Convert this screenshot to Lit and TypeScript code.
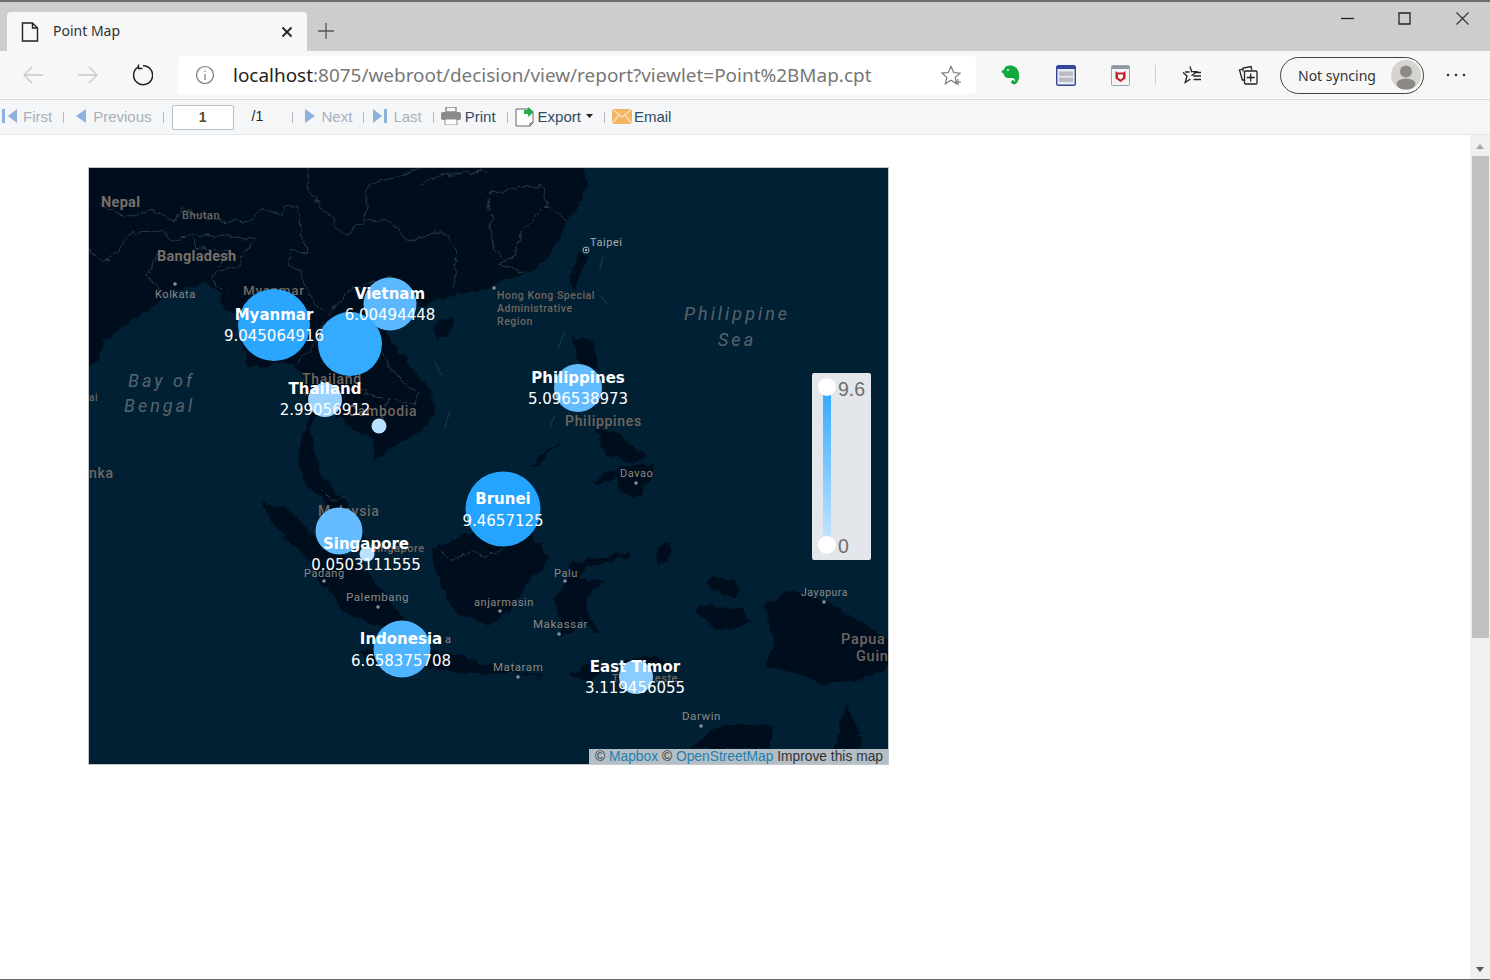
import { LitElement, html, css, svg } from "lit";
import { customElement } from "lit/decorators.js";

// land shapes are in "zoom space": 3 units = 1px, origin at map top-left
const LAND = [
  "M0 0L1480 0L1500 50L1480 100L1440 170L1380 280L1330 320L1260 340L1210 370L1160 380L1060 400L1000 425L920 430L880 470L900 510L960 590L1030 680L1042 740L1000 800L920 840L862 885L855 820L790 790L740 745L690 750L668 800L690 900L720 960L770 1000L800 1060L835 1125L780 1110L740 1080L700 1000L650 960L630 900L640 820L670 750L650 690L640 620L590 590L540 605L480 605L460 500L450 450L410 430L390 380L350 350L300 370L230 390L200 420L100 490L45 530L30 590L0 600Z",
  "M1030 490L1060 462L1100 458L1090 500L1050 525Z",
  "M1480 262L1500 270L1470 340L1462 378L1440 340Z",
  "M1455 515L1520 525L1525 600L1490 650L1470 600Z",
  "M1520 790L1580 800L1670 870L1640 900L1550 860Z",
  "M1330 900L1420 820L1410 835L1345 905Z",
  "M1510 950L1590 905L1700 900L1690 950L1640 1000L1595 980L1590 940L1520 960Z",
  "M520 1015L600 1030L700 1130L830 1210L920 1330L965 1370L880 1385L780 1350L700 1250L640 1170L560 1080Z",
  "M800 1460L950 1440L1100 1470L1200 1500L1320 1520L1400 1540L1300 1525L1180 1530L1000 1510L850 1490Z",
  "M1030 1150L1130 1110L1210 1095L1310 1090L1390 1180L1320 1250L1260 1340L1200 1385L1100 1340L1060 1270Z",
  "M1440 1195L1630 1160L1625 1175L1500 1205L1470 1240L1550 1245L1500 1290L1490 1330L1540 1410L1500 1390L1480 1350L1460 1400L1420 1410L1400 1300L1440 1240Z",
  "M1440 1530L1520 1490L1570 1510L1500 1550ZM1600 1490L1700 1470L1760 1510L1640 1520Z",
  "M1860 1240L1900 1235L1960 1260L1940 1300L1860 1270ZM1710 1150L1750 1130L1740 1190L1710 1200Z",
  "M2030 1320L2100 1275L2200 1300L2300 1360L2400 1420L2400 1510L2300 1550L2220 1560L2100 1520L2030 1500L2060 1430Z",
  "M1800 1750L1900 1680L2060 1680L2040 1750ZM2240 1750L2270 1620L2310 1680L2320 1750Z",
  "M1840 1320L1960 1330L1990 1370L1900 1400L1820 1340Z",
];

const BORDERS = [
  "M30 110L100 150L200 140L260 170L280 130L400 170L480 170L520 130L580 150L600 120L630 120L640 200L660 260L610 260L600 300L640 320L660 380L700 440",
  "M0 250L50 290L90 260L100 230L150 200L230 200L250 230L320 210L420 215L500 220L450 300L390 320L370 340L420 390",
  "M210 260L180 330L230 390M320 220L320 250L420 260L390 310M660 10L660 80L720 150L770 210L830 170L900 160L960 230L1060 200L1100 240L1100 370",
  "M720 450L790 370L860 350L905 340M905 340L1000 430M880 560L930 640L990 680L980 720L900 700L880 780M700 470L690 530L620 600M650 690L740 660L820 680L880 700",
  "M830 170L840 60L920 40L1000 10M1000 60L1050 30L1200 20M1200 90L1270 70L1360 60L1380 120L1440 170M1380 120L1300 200L1280 270L1230 300L1310 320M1200 100L1215 240L1240 280",
  "M700 970L740 1010L770 990M1050 1150L1090 1185L1150 1160L1200 1175L1240 1150",
];

const ISLES = [
  "M1535 390L1560 420M1040 590L1060 630M1085 740L1070 790M1545 275L1535 315M1430 500L1410 550M1400 750L1385 790",
];

// x, baseline y are page coordinates
const LABELS: [string, number, number, number, string?][] = [
  ["Nepal", 101, 207, 14.5, "strong"],
  ["Bhutan", 182, 219, 11],
  ["Bangladesh", 157, 261, 14.5, "strong"],
  ["Kolkata", 155, 298, 11, "city"],
  ["Myanmar", 243, 295, 13.5],
  ["Thailand", 302, 384, 14],
  ["Cambodia", 348, 416, 14],
  ["ai", 89, 401, 10],
  ["nka", 89, 478, 14],
  ["Malaysia", 318, 516, 14],
  ["Singapore", 370, 552, 11],
  ["Padang", 304, 577, 11, "city"],
  ["Palembang", 346, 601, 11.5, "city"],
  ["a", 445, 643, 11, "city"],
  ["anjarmasin", 474, 606, 11, "city"],
  ["Makassar", 533, 628, 11.5, "city"],
  ["Palu", 554, 577, 11, "city"],
  ["Davao", 620, 477, 11, "city"],
  ["Jayapura", 801, 596, 10.5, "city"],
  ["Papua", 841, 644, 14.5],
  ["Guin", 856, 661, 14.5],
  ["Mataram", 493, 671, 11.5, "city"],
  ["Darwin", 682, 720, 11.5, "city"],
  ["Taipei", 590, 246, 11, "pale"],
  ["Hong Kong Special", 497, 299, 10.5],
  ["Administrative", 497, 312, 10.5],
  ["Region", 497, 325, 10.5],
  ["Philippines", 565, 426, 14],
  ["Timor-Leste", 612, 682, 11],
  ["Bay of", 128, 387, 18, "sea"],
  ["Bengal", 124, 412, 18, "sea"],
  ["Philippine", 684, 320, 18, "sea"],
  ["Sea", 718, 346, 18, "sea"],
];

const DOTS: [number, number][] = [
  [175, 284], [494, 288], [324, 581], [378, 607], [500, 611], [559, 634],
  [565, 581], [636, 483], [824, 602], [518, 677], [701, 726],
];

const BUBBLES: [number, number, number, string][] = [
  [390, 304, 26.5, "#5ab8ff"],
  [274, 325, 36, "#2aa6ff"],
  [350, 344, 32, "#35abff"],
  [325, 400, 17, "#99d2ff"],
  [379, 426, 7.5, "#b9e0ff"],
  [578, 388, 24, "#62bbff"],
  [503, 509, 37.5, "#24a4ff"],
  [339, 531, 23.5, "#64bbff"],
  [367, 554, 7.5, "#b9e0ff"],
  [402, 649, 28.5, "#4fb4ff"],
  [636, 677, 17, "#8bccff"],
];

const POINTS: [string, string, number, number, number][] = [
  ["Myanmar", "9.045064916", 274, 320, 341],
  ["Vietnam", "6.00494448", 390, 299, 320],
  ["Thailand", "2.99056912", 325, 394, 415],
  ["Philippines", "5.096538973", 578, 383, 404],
  ["Brunei", "9.4657125", 503, 504, 526],
  ["Singapore", "0.0503111555", 366, 549, 570],
  ["Indonesia", "6.658375708", 401, 644, 666],
  ["East Timor", "3.119456055", 635, 672, 693],
];

const MX = 89;
const MY = 168;

@customElement("point-map")
class PointMap extends LitElement {
  static styles = css`
    :host {
      display: block;
      position: relative;
      width: 799px;
      height: 596px;
      background: #012033;
      overflow: hidden;
      box-shadow: 0 0 0 1px #c4c8cc;
    }
    svg.canvas {
      display: block;
      width: 799px;
      height: 596px;
    }
    .land { fill: #00111f; }
    .border { fill: none; stroke: #36424c; stroke-width: 2.4; }
    .isle { fill: none; stroke: #2b4252; stroke-width: 2.4; }
    .lbl {
      font-family: Roboto, sans-serif;
      fill: #6f6660;
      font-weight: 500;
      letter-spacing: 0.05em;
    }
    .lbl.strong { fill: #77706a; font-weight: 700; letter-spacing: 0.02em; }
    .lbl.city { fill: #8b8a88; font-weight: 400; }
    .lbl.pale { fill: #a9adb0; font-weight: 400; }
    .lbl.sea { fill: #56646e; font-style: italic; font-weight: 400; letter-spacing: 3px; }
    .dot { fill: #8b8f92; }
    .name, .val {
      font-family: "DejaVu Sans", sans-serif;
      fill: #fff;
      text-anchor: middle;
      font-size: 15px;
    }
    .name { font-weight: 700; }
    .legend {
      position: absolute;
      left: 723px;
      top: 205px;
      width: 59px;
      height: 187px;
      background: #e3e6ea;
      border-radius: 2px;
      display: flex;
      padding: 5px 0 6px 6px;
      box-sizing: border-box;
    }
    .rail {
      position: relative;
      width: 18px;
      display: flex;
      justify-content: center;
    }
    .bar {
      width: 8px;
      margin: 9px 0;
      background: linear-gradient(#2fa8ff, #c8e6ff);
    }
    .knob {
      position: absolute;
      left: 0;
      width: 18px;
      height: 18px;
      border-radius: 50%;
      background: #fff;
    }
    .knob.hi { top: 0; }
    .knob.lo { bottom: 0; }
    .scale {
      display: flex;
      flex-direction: column;
      justify-content: space-between;
      margin: 0 0 -3px 2px;
      font: 19.5px/22px "Liberation Sans", sans-serif;
      color: #6e6e6e;
    }
    .attrib {
      position: absolute;
      right: 0;
      bottom: 0;
      height: 15px;
      width: 299px;
      padding-left: 6px;
      box-sizing: border-box;
      background: #b4bec5;
      font: 13.8px/15px "Liberation Sans", sans-serif;
      color: #333;
      white-space: nowrap;
    }
    .attrib a { color: #1f80b0; text-decoration: none; }
  `;

  render() {
    return html`
      <svg class="canvas" viewBox="0 0 799 596">
        <defs>
          <filter id="rough" filterUnits="userSpaceOnUse" x="-100" y="-100" width="2600" height="2000">
            <feTurbulence type="fractalNoise" baseFrequency="0.035" numOctaves="3" seed="4"></feTurbulence>
            <feDisplacementMap in="SourceGraphic" scale="26" xChannelSelector="R" yChannelSelector="G"></feDisplacementMap>
          </filter>
        </defs>
        <g transform="translate(-1,-3) scale(0.33333)">
          <g filter="url(#rough)">
            ${LAND.map((d) => svg`<path class="land" d=${d}></path>`)}
            ${BORDERS.map((d) => svg`<path class="border" d=${d}></path>`)}
          </g>
          ${ISLES.map((d) => svg`<path class="isle" d=${d}></path>`)}
        </g>
        ${DOTS.map(([x, y]) => svg`<circle class="dot" cx=${x - MX} cy=${y - MY} r="1.8"></circle>`)}
        <circle cx=${586 - MX} cy=${250 - MY} r="3" fill="none" stroke="#a9adb0"></circle>
        <circle cx=${586 - MX} cy=${250 - MY} r="1.2" fill="#a9adb0"></circle>
        ${LABELS.map(
          ([t, x, y, s, k]) =>
            svg`<text class="lbl ${k ?? ""}" x=${x - MX} y=${y - MY} font-size=${s}>${t}</text>`
        )}
        ${BUBBLES.map(
          ([x, y, r, c]) => svg`<circle cx=${x - MX} cy=${y - MY} r=${r} fill=${c}></circle>`
        )}
        ${POINTS.map(
          ([n, v, x, y1, y2]) => svg`
            <text class="name" x=${x - MX} y=${y1 - MY}>${n}</text>
            <text class="val" x=${x - MX} y=${y2 - MY}>${v}</text>`
        )}
      </svg>
      <div class="legend">
        <div class="rail">
          <div class="bar"></div>
          <div class="knob hi"></div>
          <div class="knob lo"></div>
        </div>
        <div class="scale"><span>9.6</span><span>0</span></div>
      </div>
      <div class="attrib">© <a>Mapbox</a> © <a>OpenStreetMap</a> Improve this map</div>
    `;
  }
}

@customElement("app-root")
class AppRoot extends LitElement {
  static styles = css`
    :host {
      display: flex;
      flex-direction: column;
      width: 1490px;
      height: 980px;
      overflow: hidden;
      font-family: "Noto Sans", sans-serif;
      background: #fff;
      box-sizing: border-box;
      border-bottom: 1px solid #666;
    }
    .tabs {
      height: 49px;
      flex: none;
      border-top: 2px solid #6d6d6d;
      background: #cdcdcd;
      display: flex;
      align-items: flex-end;
      padding-left: 7px;
      position: relative;
    }
    .tab {
      width: 300px;
      height: 39px;
      background: #f7f7f7;
      border-radius: 4px 4px 0 0;
      display: flex;
      align-items: center;
      padding: 0 14px 0 14px;
      box-sizing: border-box;
      font-size: 14px;
      color: #333;
    }
    .tab span { margin: 0 0 2px 14px; flex: 1; }
    .newtab { margin: 0 0 11px 10px; display: block; }
    .winbtns {
      position: absolute;
      right: -1px;
      top: 0;
      display: flex;
    }
    .winbtns div {
      width: 57.5px;
      height: 32px;
      display: flex;
      align-items: center;
      justify-content: center;
    }
    .nav {
      height: 48px;
      flex: none;
      background: #f7f7f7;
      display: flex;
      align-items: center;
      padding-left: 5px;
      border-bottom: 1px solid #d9d9d9;
    }
    .slot {
      width: 55px;
      height: 38px;
      flex: none;
      display: flex;
      align-items: center;
      justify-content: center;
    }
    .slot.reload svg { margin-left: -2px; }
    .addr {
      width: 798px;
      height: 38px;
      margin: 0 7px 0 8px;
      flex: none;
      background: #fff;
      border-radius: 4px;
      display: flex;
      align-items: center;
      box-sizing: border-box;
      padding: 0 13px 0 17px;
      font-size: 18.95px;
      color: #777;
    }
    .addr .url { margin-left: 18px; flex: 1; white-space: nowrap; }
    .addr b { font-weight: 400; color: #222; }
    .vsep { width: 1px; height: 20px; background: #cfcfcf; margin: 0 0 0 7px; flex: none; }
    .slot.fav { margin-left: 8px; }
    .slot.coll { margin-left: 1px; }
    .pill {
      width: 144px;
      height: 37px;
      margin-left: 5px;
      flex: none;
      box-sizing: border-box;
      border: 1.5px solid #444;
      border-radius: 19px;
      display: flex;
      align-items: center;
      justify-content: space-between;
      padding: 0 2px 0 17px;
      font-size: 14px;
      color: #333;
    }
    .slot.more { margin-left: 4px; }
    .report {
      height: 35px;
      flex: none;
      background: #f5f6f8;
      border-bottom: 1px solid #e6e8eb;
      display: flex;
      align-items: center;
      padding: 0 0 2px 2px;
      font: 15px "Liberation Sans", sans-serif;
      color: #2f4a63;
      box-sizing: border-box;
    }
    .btn { display: flex; align-items: center; gap: 6px; flex: none; }
    .btn.off { color: #a7b1bc; }
    .btn.first { gap: 4px; }
    .btn.last { margin-left: -2px; }
    .btn.pull { margin-left: -4px; gap: 4px; }
    .btn.exp { gap: 3px; }
    .btn.mail { gap: 2px; }
    .caret { margin-left: 2px; }
    .sep { width: 1px; height: 11px; background: #b9bdc2; margin: 2px 11px 0; flex: none; }
    .page-input {
      width: 62px;
      height: 25px;
      margin: 2px 0 0 -3px;
      flex: none;
      box-sizing: border-box;
      border: 1px solid #b5bfca;
      border-radius: 2px;
      background: #fff;
      color: #5c4a1a;
      font-weight: 700;
      font-size: 14px;
      text-align: center;
      line-height: 23px;
    }
    .total { margin-left: 18px; width: 29px; color: #222; flex: none; font-size: 14px; }
    .body { flex: 1; display: flex; min-height: 0; }
    .content { flex: 1; padding: 33px 0 0 89px; }
    .scroll {
      width: 20px;
      flex: none;
      background: #f0f0f0;
      display: flex;
      flex-direction: column;
      align-items: center;
      box-sizing: border-box;
      padding: 9px 0 7px;
    }
    .thumb { width: 17px; height: 482px; margin-top: 7px; background: #c1c1c1; }
    .tri { width: 0; height: 0; border: 4px solid transparent; }
    .tri.up { border-top: 0; border-bottom: 5px solid #a8a8a8; }
    .tri.down { border-bottom: 0; border-top: 5px solid #555; margin-top: auto; }
  `;

  render() {
    return html`
      <div class="tabs">
        <div class="tab">
          <svg width="18" height="20" viewBox="0 0 18 20" fill="none" stroke="#222" stroke-width="1.4">
            <path d="M1.5 1h10l5 5v13h-15zM11.5 1v5h5"></path>
          </svg>
          <span>Point Map</span>
          <svg width="12" height="12" viewBox="0 0 12 12" stroke="#222" stroke-width="1.8"><path d="M1.5 1.5l9 9M10.5 1.5l-9 9"></path></svg>
        </div>
        <svg class="newtab" width="18" height="18" viewBox="0 0 18 18" stroke="#555" stroke-width="1.3"><path d="M9 1v16M1 9h16"></path></svg>
        <div class="winbtns">
          <div><svg width="13" height="13" viewBox="0 0 13 13" stroke="#222" stroke-width="1.3"><path d="M0 6.500h13"></path></svg></div>
          <div><svg width="13" height="13" viewBox="0 0 13 13" fill="none" stroke="#222" stroke-width="1.3"><path d="M1 1h11v11H1z"></path></svg></div>
          <div><svg width="13" height="13" viewBox="0 0 13 13" stroke="#333" stroke-width="1.1"><path d="M.5.500l12 12M12.500.500l-12 12"></path></svg></div>
        </div>
      </div>
      <div class="nav">
        <div class="slot"><svg width="22" height="20" viewBox="0 0 22 20" fill="none" stroke="#c9c9c9" stroke-width="1.4"><path d="M21 10H2M10 2l-8 8 8 8"></path></svg></div>
        <div class="slot"><svg width="22" height="20" viewBox="0 0 22 20" fill="none" stroke="#c9c9c9" stroke-width="1.4"><path d="M1 10h19M12 2l8 8-8 8"></path></svg></div>
        <div class="slot reload"><svg width="22" height="22" viewBox="0 0 22 22" fill="none" stroke="#222" stroke-width="1.5"><path d="M7 3.200A9.500 9.500 0 1 0 12 1.700M7.500 .5v4h4"></path></svg></div>
        <div class="addr">
          <svg width="20" height="20" viewBox="0 0 20 20" fill="none" stroke="#777" stroke-width="1.2"><circle cx="10" cy="10" r="8.500"></circle><path d="M10 9v6M10 5.500v1.500"></path></svg>
          <span class="url"><b>localhost</b>:8075/webroot/decision/view/report?viewlet=Point%2BMap.cpt</span>
          <svg width="22" height="21" viewBox="0 0 22 21" fill="none" stroke="#777" stroke-width="1.2"><path d="M10 1.500l2.700 6 6.300.6-4.800 4.300 1.400 6.300L10 15.300l-5.600 3.400 1.400-6.300L1 8.100l6.300-.6z"></path><path d="M17 14v6M14 17h6"></path></svg>
        </div>
        <div class="slot">
          <svg width="19" height="20" viewBox="0 0 19 20"><path fill="#12a83c" d="M3 4.500C4 1 7 .3 10 .6c3.500.3 6.500 2.500 7.500 6 1 3.500 1 7-1 10.500-1.300 2.300-4.500 3-5.800 1.500-1-1.200-.5-3 1-3.300 1 -.2 1.800.4 1.800 1.200l.8-.5c-.2-2-1.800-3.300-3.800-3C8.500 13 6 13.500 4.500 12 3 11 3 9.500 2.500 8.500 1.500 8 .5 7.500.6 6.500 1 5.500 2 5 3 4.500z"></path><circle cx="7" cy="5" r="1" fill="#f7f7f7"></circle></svg>
        </div>
        <div class="slot">
          <svg width="20" height="21" viewBox="0 0 20 21"><rect x=".7" y=".7" width="18.600" height="19.600" rx="1.500" fill="#e9ebf1" stroke="#35459c" stroke-width="1.400"></rect><rect x="1" y="1" width="18" height="3" fill="#35459c"></rect><rect x="3" y="6.500" width="14" height="4.500" fill="#b9bcc0"></rect><rect x="3" y="12.500" width="14" height="4.500" fill="#b9bcc0"></rect></svg>
        </div>
        <div class="slot">
          <svg width="19" height="21" viewBox="0 0 19 21"><rect x=".5" y=".5" width="18" height="20" rx="1" fill="#f4f4f4" stroke="#9aa5ad"></rect><rect x="1" y="1" width="17" height="3" fill="#8d9aa3"></rect><path fill="#c8202a" d="M4.500 6l2 1.500h6L14.500 6v7.500L9.500 17l-5-3.500z"></path><path fill="#fff" d="M7 9.500h5v3L9.500 14.500 7 12.500z"></path></svg>
        </div>
        <div class="vsep"></div>
        <div class="slot fav">
          <svg width="20" height="20" viewBox="0 0 20 20" fill="none" stroke="#222" stroke-width="1.300"><path d="M8 1.500l1.600 5.200H14.500L10.500 10l1.300 0M3 7h4.600M1 7.500L5 11 3.200 17.500 8.500 14"></path><path d="M12 7.500h7M11.500 11h7.500M11.500 14.500h7.500"></path></svg>
        </div>
        <div class="slot coll">
          <svg width="20" height="20" viewBox="0 0 20 20" fill="none" stroke="#222" stroke-width="1.300"><path d="M5 6.500V3l8-1.500.8 3.500M5 4L1.500 5l2.800 10H6"></path><rect x="6.500" y="6" width="12.500" height="13" rx="1"></rect><path d="M12.700 8.500v8M8.700 12.500h8"></path></svg>
        </div>
        <div class="pill">
          <span>Not syncing</span>
          <svg width="30" height="30" viewBox="0 0 30 30"><circle cx="15" cy="15" r="15" fill="#d6d4d1"></circle><circle cx="15" cy="11.500" r="6" fill="#8d8a86"></circle><ellipse cx="15" cy="24" rx="9.500" ry="5.500" fill="#8d8a86"></ellipse></svg>
        </div>
        <div class="slot more">
          <svg width="20" height="4" viewBox="0 0 20 4" fill="#333"><circle cx="2" cy="2" r="1.300"></circle><circle cx="10" cy="2" r="1.300"></circle><circle cx="18" cy="2" r="1.300"></circle></svg>
        </div>
      </div>
      <div class="report">
        <div class="btn off first">
          <svg width="17" height="14" viewBox="0 0 17 14" fill="#8db3dc"><rect x="0" y="0" width="3" height="14"></rect><path d="M15 0v14L6 7z"></path></svg>
          <span>First</span>
        </div>
        <div class="sep"></div>
        <div class="btn off">
          <svg width="12" height="14" viewBox="0 0 12 14" fill="#8db3dc"><path d="M11 0v14L1 7z"></path></svg>
          <span>Previous</span>
        </div>
        <div class="sep"></div>
        <div class="page-input">1</div>
        <div class="total">/1</div>
        <div class="sep"></div>
        <div class="btn off">
          <svg width="12" height="14" viewBox="0 0 12 14" fill="#8db3dc"><path d="M1 0v14l10-7z"></path></svg>
          <span>Next</span>
        </div>
        <div class="sep"></div>
        <div class="btn off last">
          <svg width="14" height="14" viewBox="0 0 14 14" fill="#8db3dc"><path d="M0 0v14l9-7z"></path><rect x="11" y="0" width="3" height="14"></rect></svg>
          <span>Last</span>
        </div>
        <div class="sep"></div>
        <div class="btn pull">
          <svg width="20" height="18" viewBox="0 0 20 18" fill="#8a8a8a"><path d="M5 0h10v5H5z" fill="none" stroke="#8a8a8a" stroke-width="1.400"></path><rect x="0" y="5" width="20" height="8" rx="2"></rect><rect x="4" y="12" width="12" height="6" fill="#fff" stroke="#8a8a8a"></rect></svg>
          <span>Print</span>
        </div>
        <div class="sep"></div>
        <div class="btn pull exp">
          <svg width="20" height="21" viewBox="0 0 20 21" fill="none"><path d="M1 3h12v4h5v10l-3 3H1z" fill="#fff" stroke="#666"></path><path d="M15 20v-3h3" stroke="#666"></path><path fill="#2ea84a" d="M9 4h4V1l6 5-6 5V8H9z"></path></svg>
          <span>Export</span>
          <svg class="caret" width="7" height="4" viewBox="0 0 7 4" fill="#222"><path d="M0 0h7L3.500 4z"></path></svg>
        </div>
        <div class="sep"></div>
        <div class="btn pull mail">
          <svg width="20" height="15" viewBox="0 0 20 15"><rect width="20" height="15" fill="#f3b562"></rect><path d="M0 0l10 8 10-8M0 15l7-9M20 15l-7-9" fill="none" stroke="#fbe3c0" stroke-width="1.300"></path></svg>
          <span>Email</span>
        </div>
      </div>
      <div class="body">
        <div class="content"><point-map></point-map></div>
        <div class="scroll">
          <div class="tri up"></div>
          <div class="thumb"></div>
          <div class="tri down"></div>
        </div>
      </div>
    `;
  }
}
